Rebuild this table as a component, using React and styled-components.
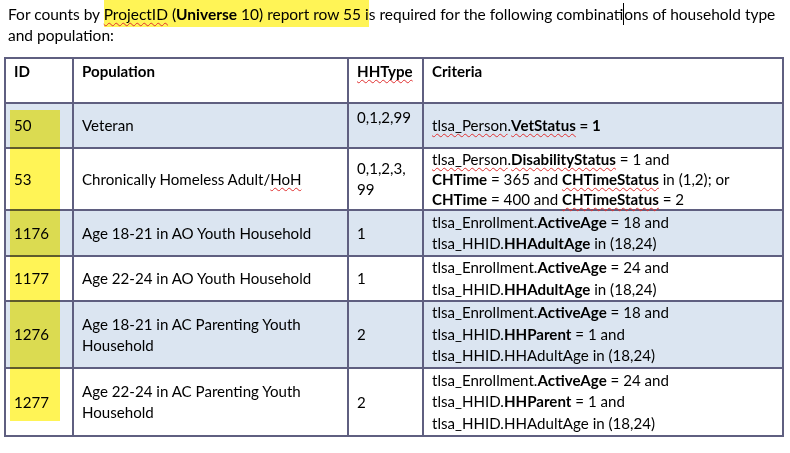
import React from 'react';
import styled, { createGlobalStyle } from 'styled-components';

const GlobalStyle = createGlobalStyle`
  html, body {
    margin: 0;
    padding: 0;
    background: #ffffff;
  }
  body {
    font-family: Lato, "Liberation Sans", sans-serif;
    color: #000000;
  }
`;

const Page = styled.div`
  position: relative;
  width: 790px;
  height: 453px;
  overflow: hidden;
`;

const Intro = styled.p`
  margin: 0;
  padding: 3px 0 0 8px;
  font-size: 15.5px;
  line-height: 21px;
  white-space: nowrap;
`;

const Mark = styled.span`
  background: #fff456;
  padding: 5px 0 4px 0;
`;

const Squiggle = styled.span`
  text-decoration: underline wavy #e03030;
  text-decoration-thickness: 1px;
  text-underline-offset: 2px;
  text-decoration-skip-ink: none;
`;

const Caret = styled.span`
  display: inline-block;
  width: 0;
  height: 22px;
  border-left: 1px solid #000;
  vertical-align: -5px;
`;

const TableWrap = styled.div`
  position: relative;
  margin: 11px 0 0 4px;
  width: 778px;
`;

const Table = styled.table`
  border-collapse: collapse;
  table-layout: fixed;
  width: 778px;
  font-size: 15.1px;
  line-height: 21px;
`;

const Row = styled.tr`
  height: ${p => p.$h}px;
  background: ${p => (p.$shaded ? '#dbe5f1' : '#ffffff')};
`;

const Head = styled.th`
  border: 2px solid #5f5f80;
  text-align: left;
  vertical-align: top;
  font-weight: 700;
  padding: 2px 8px 0 8px;
`;

const Cell = styled.td`
  border: 2px solid #5f5f80;
  padding: 0 8px;
  vertical-align: ${p => p.$valign || 'middle'};
  padding-top: ${p => (p.$valign === 'top' ? '3px' : '0')};
`;

const CritLine = styled.div`
  line-height: ${p => (p.$tight ? '20px' : '21.5px')};
  white-space: nowrap;
`;

const Highlighter = styled.div`
  position: absolute;
  left: 6px;
  top: 53px;
  width: 50px;
  height: 311px;
  background: #fff456;
  mix-blend-mode: multiply;
  pointer-events: none;
`;

const rows = [
  {
    id: '50', h: 45, shaded: true,
    pop: 'Veteran',
    hh: '0,1,2,99', hhTop: true,
    crit: [<><Squiggle>tlsa_Person</Squiggle>.<b><Squiggle>VetStatus</Squiggle> = 1</b></>],
  },
  {
    id: '53', h: 61,
    pop: <>Chronically Homeless Adult/<Squiggle>HoH</Squiggle></>,
    hh: <>0,1,2,3,<br />99</>,
    crit: [
      <><Squiggle>tlsa_Person</Squiggle>.<b><Squiggle>DisabilityStatus</Squiggle></b> = 1 and</>,
      <><b>CHTime</b> = 365 and <b><Squiggle>CHTimeStatus</Squiggle></b> in (1,2); or</>,
      <><b>CHTime</b> = 400 and <b><Squiggle>CHTimeStatus</Squiggle></b> = 2</>,
    ],
    tight: true,
  },
  {
    id: '1176', h: 46, shaded: true,
    pop: 'Age 18-21 in AO Youth Household',
    hh: '1',
    crit: [
      <>tlsa_Enrollment.<b>ActiveAge</b> = 18 and</>,
      <>tlsa_HHID.<b>HHAdultAge</b> in (18,24)</>,
    ],
  },
  {
    id: '1177', h: 45,
    pop: 'Age 22-24 in AO Youth Household',
    hh: '1',
    crit: [
      <>tlsa_Enrollment.<b>ActiveAge</b> = 24 and</>,
      <>tlsa_HHID.<b>HHAdultAge</b> in (18,24)</>,
    ],
  },
  {
    id: '1276', h: 67, shaded: true,
    pop: <>Age 18-21 in AC Parenting Youth<br />Household</>,
    hh: '2',
    crit: [
      <>tlsa_Enrollment.<b>ActiveAge</b> = 18 and</>,
      <>tlsa_HHID.<b>HHParent</b> = 1 and</>,
      <>tlsa_HHID.HHAdultAge in (18,24)</>,
    ],
  },
  {
    id: '1277', h: 68,
    pop: <>Age 22-24 in AC Parenting Youth<br />Household</>,
    hh: '2',
    crit: [
      <>tlsa_Enrollment.<b>ActiveAge</b> = 24 and</>,
      <>tlsa_HHID.<b>HHParent</b> = 1 and</>,
      <>tlsa_HHID.HHAdultAge in (18,24)</>,
    ],
  },
];

export default function App() {
  return (
    <Page>
      <GlobalStyle />
      <Intro>
        For counts by <Mark><Squiggle>ProjectID</Squiggle> (<b>Universe</b> 10) report row 55 i</Mark>s required for the following
        combinati<Caret />ons of household type<br />and population:
      </Intro>
      <TableWrap>
        <Table>
          <colgroup>
            <col style={{ width: 68 }} />
            <col style={{ width: 275 }} />
            <col style={{ width: 75 }} />
            <col style={{ width: 360 }} />
          </colgroup>
          <thead>
            <Row $h={45}>
              <Head>ID</Head>
              <Head>Population</Head>
              <Head><Squiggle>HHType</Squiggle></Head>
              <Head>Criteria</Head>
            </Row>
          </thead>
          <tbody>
            {rows.map(r => (
              <Row key={r.id} $h={r.h} $shaded={r.shaded}>
                <Cell>{r.id}</Cell>
                <Cell>{r.pop}</Cell>
                <Cell $valign={r.hhTop ? 'top' : undefined}>{r.hh}</Cell>
                <Cell>
                  {r.crit.map((c, i) => (
                    <CritLine key={i} $tight={r.tight}>{c}</CritLine>
                  ))}
                </Cell>
              </Row>
            ))}
          </tbody>
        </Table>
        <Highlighter />
      </TableWrap>
    </Page>
  );
}
